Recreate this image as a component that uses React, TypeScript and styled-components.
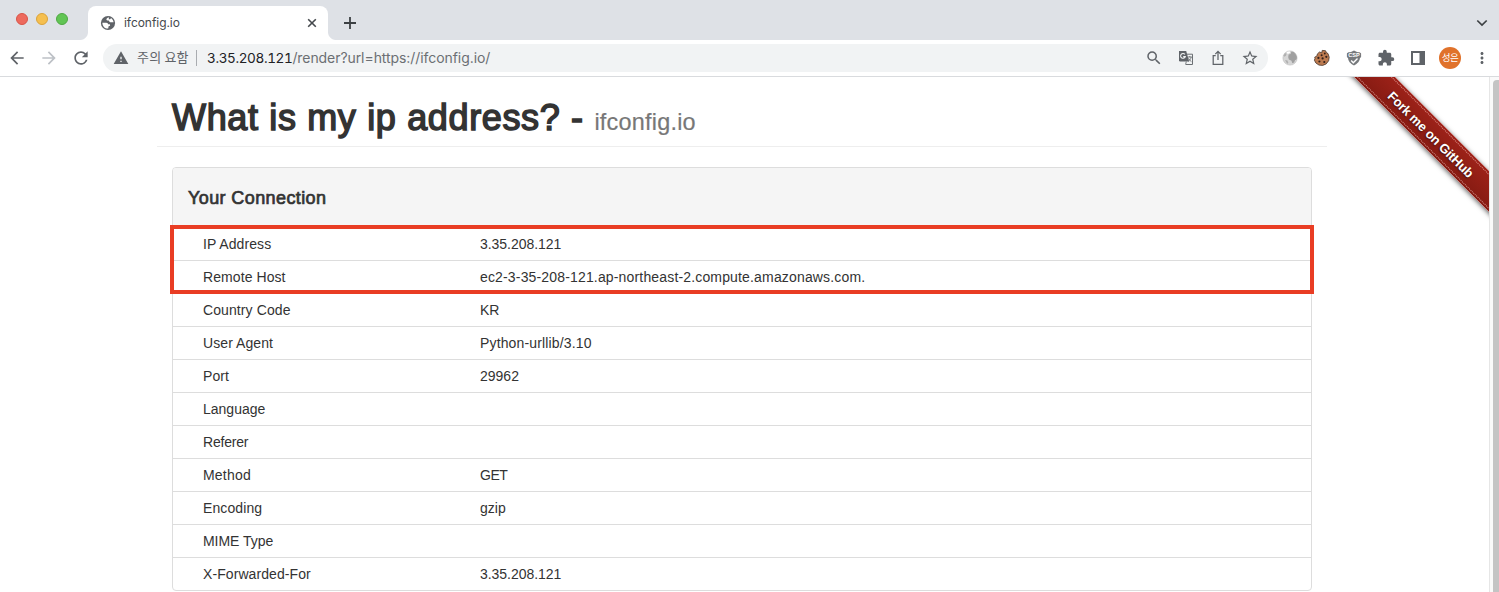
import React from "react";
import styled, { createGlobalStyle } from "styled-components";
import { MdArrowBack, MdArrowForward, MdRefresh, MdWarning, MdSearch, MdStarBorder, MdExtension, MdMoreVert } from "react-icons/md";

const GlobalStyle = createGlobalStyle`
  *, *::before, *::after { box-sizing: border-box; }
  body { margin: 0; background: #fff; overflow: hidden; }
`;

const Window = styled.div`
  width: 1499px;
  height: 592px;
  display: flex;
  flex-direction: column;
  overflow: hidden;
  font-family: Inter, "Noto Sans CJK KR", sans-serif;
`;

const TabStrip = styled.div`
  height: 40px;
  flex: none;
  display: flex;
  align-items: flex-end;
  background: #dee1e6;
  padding: 0 9px 0 16px;
`;

const Lights = styled.div`
  display: flex;
  gap: 8px;
  width: 72px;
  height: 40px;
  padding-top: 13px;
`;

const Light = styled.span<{ $fill: string; $edge: string }>`
  width: 12px;
  height: 12px;
  border-radius: 50%;
  background: ${(p) => p.$fill};
  border: 1px solid ${(p) => p.$edge};
`;

const Tab = styled.div`
  position: relative;
  width: 240px;
  height: 34px;
  display: flex;
  align-items: center;
  padding: 0 10px 0 12px;
  background: #fff;
  border-radius: 8px 8px 0 0;
  &::before, &::after {
    content: "";
    position: absolute;
    bottom: 0;
    width: 8px;
    height: 8px;
  }
  &::before {
    left: -8px;
    background: radial-gradient(circle at 0 0, transparent 7.5px, #fff 8.5px);
  }
  &::after {
    right: -8px;
    background: radial-gradient(circle at 100% 0, transparent 7.5px, #fff 8.5px);
  }
`;

const TabTitle = styled.span`
  flex: 1;
  margin-left: 8px;
  padding-bottom: 1px;
  font-size: 12px;
  letter-spacing: -0.05px;
  color: #45494d;
`;

const StripButton = styled.span<{ $width: number; $push?: boolean }>`
  width: ${(p) => p.$width}px;
  height: 34px;
  display: flex;
  align-items: center;
  justify-content: center;
  margin-left: ${(p) => (p.$push ? "auto" : "14px")};
`;

const Toolbar = styled.div`
  height: 37px;
  flex: none;
  display: flex;
  align-items: center;
  background: #fff;
  border-bottom: 1px solid #d9dbde;
  color: #5f6368;
`;

const NavButtons = styled.div`
  width: 103px;
  display: flex;
  gap: 12px;
  padding-left: 7px;
  svg { display: block; }
`;

const Omnibox = styled.div`
  width: 1165px;
  height: 28px;
  border-radius: 14px;
  background: #f1f3f4;
  display: flex;
  align-items: center;
  padding: 0 9px 0 10px;
`;

const Caution = styled.span`
  width: 52px;
  margin-left: 8px;
  padding-bottom: 2px;
  font: 13px/20px "Noto Sans CJK KR", sans-serif;
  letter-spacing: 0.2px;
  color: #5f6368;
  white-space: nowrap;
`;

const Divider = styled.span`
  width: 1px;
  height: 16px;
  margin-left: 7px;
  background: #a9acb0;
`;

const Address = styled.span`
  flex: 1;
  margin-left: 10px;
  padding-bottom: 2px;
  font-size: 14px;
  letter-spacing: -0.07px;
  color: #6b6f73;
  b {
    font-weight: 400;
    font-size: 13.6px;
    color: #202124;
    font-variant-numeric: tabular-nums;
    letter-spacing: -0.41px;
  }
`;

const OmniActions = styled.div`
  display: flex;
  gap: 14px;
  svg { display: block; }
`;

const Extensions = styled.div`
  flex: 1;
  display: flex;
  align-items: center;
  padding-left: 13px;
  gap: 14px;
  svg { display: block; flex: none; }
`;

const Avatar = styled.span`
  width: 22px;
  height: 22px;
  margin: 0 -2px;
  flex: none;
  border-radius: 50%;
  background: #e0722b;
  color: #fff;
  font: 9.5px/21px "Noto Sans CJK KR", sans-serif;
  letter-spacing: -0.5px;
  text-align: center;
`;

const Viewport = styled.div`
  flex: 1;
  display: flex;
  min-height: 0;
`;

const Page = styled.main`
  position: relative;
  flex: 1;
  overflow: hidden;
  font-family: "Liberation Sans", sans-serif;
  color: #333;
  padding: 21px 162px 0 157px;
`;

const ScrollTrack = styled.div`
  width: 10px;
  background: #fafafa;
  border-left: 1px solid #e6e6e6;
  padding: 3px 0 0 3px;
`;

const ScrollThumb = styled.div`
  width: 12px;
  height: 560px;
  border-radius: 4px 0 0 0;
  background: #c4c4c4;
`;

const PageHeader = styled.header`
  height: 49px;
  padding-left: 15px;
  border-bottom: 1px solid #eee;
  white-space: nowrap;
`;

const Title = styled.h1`
  margin: 0;
  font-size: 36px;
  line-height: 40px;
  font-weight: 400;
  -webkit-text-stroke: 1.5px #333;
  letter-spacing: 0.65px;
  small {
    font-size: 23.4px;
    color: #777;
    -webkit-text-stroke: 0.2px #777;
    letter-spacing: 0.24px;
  }
`;

const Panel = styled.section`
  position: relative;
  width: 1140px;
  height: 424px;
  margin: 20px 0 0 15px;
  border: 1px solid #ddd;
  border-radius: 4px;
`;

const PanelHeading = styled.h2`
  margin: 0;
  height: 59px;
  padding: 19px 15px 0;
  background: #f5f5f5;
  border-radius: 3px 3px 0 0;
  font-size: 18px;
  line-height: 22px;
  font-weight: 400;
  -webkit-text-stroke: 0.7px #333;
  letter-spacing: 0.4px;
`;

const Row = styled.div`
  height: 33px;
  display: grid;
  grid-template-columns: 277px 1fr;
  align-items: center;
  padding-left: 30px;
  border-top: 1px solid #ddd;
  font-size: 14px;
  line-height: 20px;
`;

const Cell = styled.span<{ $spacing?: number }>`
  letter-spacing: ${(p) => p.$spacing ?? 0}px;
`;

const Highlight = styled.div`
  position: absolute;
  left: -3px;
  top: 57px;
  width: 1144px;
  height: 69px;
  border: 4px solid #e93d24;
`;

const Ribbon = styled.a`
  position: absolute;
  right: -66.5px;
  top: 42px;
  width: 250px;
  height: 29px;
  display: flex;
  align-items: center;
  justify-content: center;
  padding: 1px 0 0 1px;
  transform: rotate(45deg);
  background: linear-gradient(#9e2219, #861b12);
  box-shadow: 0 1px 5px rgba(0, 0, 0, 0.65);
  color: #fff;
  font-size: 13px;
  font-weight: 700;
  letter-spacing: -0.1px;
  text-shadow: 0 1px 2px rgba(0, 0, 0, 0.6);
  &::before {
    content: "";
    position: absolute;
    inset: 2px 0;
    border: dotted rgba(255, 205, 200, 0.65);
    border-width: 1px 0;
  }
`;

const rows: [string, string, number, number][] = [
  ["IP Address", "3.35.208.121", 0.08, -0.04],
  ["Remote Host", "ec2-3-35-208-121.ap-northeast-2.compute.amazonaws.com.", 0.08, 0.16],
  ["Country Code", "KR", 0.1, 0],
  ["User Agent", "Python-urllib/3.10", 0.08, 0.15],
  ["Port", "29962", 0.1, 0],
  ["Language", "", 0, 0],
  ["Referer", "", -0.2, 0],
  ["Method", "GET", 0.2, -0.5],
  ["Encoding", "gzip", 0.1, 0],
  ["MIME Type", "", -0.04, 0],
  ["X-Forwarded-For", "3.35.208.121", 0.08, -0.04],
];

const Favicon = () => (
  <svg width="16" height="16" viewBox="0 0 16 16">
    <circle cx="8" cy="8" r="7.1" fill="#5f6368" />
    <path d="M2.4 7.7H6.2C7.8 7.7 8 8.5 8 9.3H9.2C10 9.3 10.3 10 10 10.8L8.6 11.3 8.2 13.6C5 13.8 2.3 11.2 2.4 7.7Z M8.6 2.4C7.2 2.6 6.6 3.3 6.4 4.3 6.3 5.3 7.2 5.7 8.5 5.6 9.4 5.6 9 7 10 7.3H13.6C13.4 4.6 11.4 2.4 8.6 2.4Z" fill="#fff" />
    <path d="M9.3 1.3 11.2 2.7 10.2 4.3 8.7 4.2Z" fill="#5f6368" />
  </svg>
);

const Translate = () => (
  <svg width="18" height="18" viewBox="0 0 18 18">
    <path d="M7 5.2h8.5v10.3H8.8" fill="#f1f3f4" stroke="#6b6f73" strokeWidth="1" />
    <path d="M2 2h7.2l3 10.5H3.2A1.2 1.2 0 0 1 2 11.3Z" fill="#5f6368" />
    <path d="M7.9 5.4A2.4 2.4 0 1 0 8.3 7.6H6.2" fill="none" stroke="#f1f3f4" strokeWidth="1.1" />
    <path d="M10.9 8h4M12.8 7v1M14.2 8c-.4 2-1.4 3.2-2.8 4.3M11.6 9.4c.7 1.5 1.6 2.4 2.8 3.2M9.3 12.5l-.7 3" fill="none" stroke="#6b6f73" strokeWidth=".9" />
  </svg>
);

const Share = () => (
  <svg width="18" height="18" viewBox="0 0 18 18" fill="none" stroke="#5f6368" strokeWidth="1.25">
    <path d="M6.7 6.6H4.2v8.7h9.6V6.6h-2.5M9 11V2.7M6.3 5.1 9 2.4l2.7 2.7" />
  </svg>
);

const GrayGlobe = () => (
  <svg width="18" height="18" viewBox="0 0 18 18">
    <circle cx="9" cy="9" r="7.1" fill="#d6d6d6" stroke="#bcbcbc" strokeWidth=".6" />
    <path d="M7.6 5.6 9.6 5l.8-2.6 2.2.6 1.9 2 1.4 2.8-.2 2.4-1.7 1-.9 2.2-1.8.8-.8-2.5-2.6-1.3-.7-2.2Z" fill="#a0a0a0" />
    <path d="M2.4 6.5 4 4.2l1.7.4-.8 2.1-1.4 1Z" fill="#b0b0b0" />
    <path d="m5.8 3.1 2.8-.8.6 1.2-1.8 1.3-1.6-.4Z" fill="#fff" />
    <path d="m4 11 2.5.6.7 2-.9 1.4Z" fill="#b0b0b0" />
  </svg>
);

const Cookie = () => (
  <svg width="18" height="18" viewBox="0 0 18 18">
    <path d="M6.5 3 8.8 3.8l.4-2.4 3.3.3.9 1.9 1.6 1 1.2 3.6-.6 3.6-2.4 3.1-3.5 1.5-3.7-.3-3.1-2.1-1.5-2.8.6-1.8-.3-1.2 2.3-1.3.4-2Z" fill="#bd7b50" stroke="#48352b" strokeWidth=".8" />
    <g fill="#31201b">
      <circle cx="8.6" cy="6.2" r="1" /><circle cx="11.8" cy="4.5" r=".9" />
      <circle cx="5.4" cy="8.9" r="1.1" /><circle cx="9.6" cy="9.4" r="1.1" />
      <circle cx="13.3" cy="7.8" r="1.1" /><circle cx="6.4" cy="12.5" r="1.1" />
      <circle cx="11.3" cy="13" r="1.1" />
    </g>
  </svg>
);

const ShieldText = styled.text`
  font: 700 5.6px "Liberation Sans", sans-serif;
`;

const Shield = () => (
  <svg width="18" height="18" viewBox="0 0 18 18">
    <path d="M9 1.5c2 1.4 4 1.8 6 1.9v5.2c0 3.5-2.4 6.3-6 7.8-3.6-1.5-6-4.3-6-7.8V3.4c2-.1 4-.5 6-1.9Z" fill="#777a7d" />
    <rect x="1.9" y="3.7" width="14.2" height="5" rx="1" fill="#777a7d" />
    <ShieldText x="9" y="8.2" textAnchor="middle" fill="#fff">CSP</ShieldText>
    <path d="m6.2 11.6 2.1 2.1 4.2-4.2" fill="none" stroke="#fff" strokeWidth="1.4" />
  </svg>
);

const SidePanel = () => (
  <svg width="18" height="18" viewBox="0 0 18 18">
    <path d="M2 2h14v14H2Zm2 2v10h6.5V4Z" fill="#5f6368" fillRule="evenodd" />
  </svg>
);

export default function App() {
  return (
    <>
      <GlobalStyle />
      <Window>
        <TabStrip>
          <Lights>
            <Light $fill="#ed6a5e" $edge="#d95448" />
            <Light $fill="#f5bf4f" $edge="#dba33a" />
            <Light $fill="#61c554" $edge="#4fa843" />
          </Lights>
          <Tab>
            <Favicon />
            <TabTitle>ifconfig.io</TabTitle>
            <svg width="12" height="12" viewBox="0 0 12 12" stroke="#45494d" strokeWidth="1.6">
              <path d="m2.2 2.2 7.6 7.6M9.8 2.2 2.2 9.8" />
            </svg>
          </Tab>
          <StripButton $width={16}>
            <svg width="14" height="14" viewBox="0 0 14 14" stroke="#3c4043" strokeWidth="1.8">
              <path d="M7 1v12M1 7h12" />
            </svg>
          </StripButton>
          <StripButton $width={16} $push>
            <svg width="12" height="12" viewBox="0 0 12 12" fill="none" stroke="#3c4043" strokeWidth="1.7">
              <path d="m1.3 3.5 4.7 4.6 4.7-4.6" />
            </svg>
          </StripButton>
        </TabStrip>
        <Toolbar>
          <NavButtons>
            <MdArrowBack size={20} />
            <MdArrowForward size={20} color="#bdc1c6" />
            <MdRefresh size={20} />
          </NavButtons>
          <Omnibox>
            <MdWarning size={16} />
            <Caution>주의 요함</Caution>
            <Divider />
            <Address><b>3.35.208.121</b>/render?url=https://ifconfig.io/</Address>
            <OmniActions>
              <MdSearch size={18} />
              <Translate />
              <Share />
              <MdStarBorder size={18} />
            </OmniActions>
          </Omnibox>
          <Extensions>
            <GrayGlobe />
            <Cookie />
            <Shield />
            <MdExtension size={18} />
            <SidePanel />
            <Avatar>성은</Avatar>
            <MdMoreVert size={18} />
          </Extensions>
        </Toolbar>
        <Viewport>
          <Page>
            <PageHeader>
              <Title>What is my ip address? - <small>ifconfig.io</small></Title>
            </PageHeader>
            <Panel>
              <PanelHeading>Your Connection</PanelHeading>
              {rows.map(([label, value, labelSpacing, valueSpacing]) => (
                <Row key={label}>
                  <Cell $spacing={labelSpacing}>{label}</Cell>
                  <Cell $spacing={valueSpacing}>{value}</Cell>
                </Row>
              ))}
              <Highlight />
            </Panel>
            <Ribbon>Fork me on GitHub</Ribbon>
          </Page>
          <ScrollTrack>
            <ScrollThumb />
          </ScrollTrack>
        </Viewport>
      </Window>
    </>
  );
}
